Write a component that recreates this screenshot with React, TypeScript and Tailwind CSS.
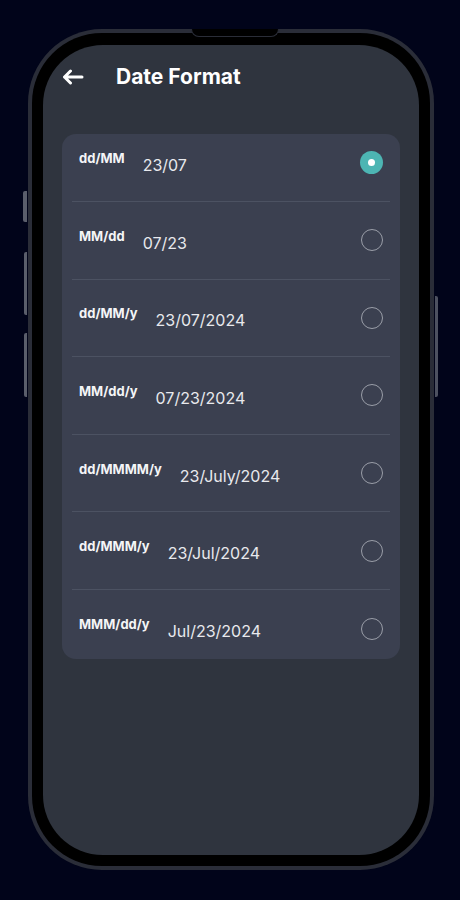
import React from "react";

const formats = [
  { label: "dd/MM", value: "23/07", selected: true },
  { label: "MM/dd", value: "07/23" },
  { label: "dd/MM/y", value: "23/07/2024" },
  { label: "MM/dd/y", value: "07/23/2024" },
  { label: "dd/MMMM/y", value: "23/July/2024" },
  { label: "dd/MMM/y", value: "23/Jul/2024" },
  { label: "MMM/dd/y", value: "Jul/23/2024" },
];

function BackArrow() {
  return (
    <svg width="22" height="16" viewBox="0 0 22 16" fill="none">
      <path
        d="M20 8H2.5M8.5 2L2.5 8L8.5 14"
        stroke="#ffffff"
        strokeWidth="3"
        strokeLinecap="round"
        strokeLinejoin="round"
      />
    </svg>
  );
}

function Radio({ checked }: { checked?: boolean }) {
  if (checked) {
    return (
      <span className="flex h-[23px] w-[23px] items-center justify-center rounded-full bg-[#4db5b3]">
        <span className="h-[7px] w-[7px] rounded-full bg-white" />
      </span>
    );
  }
  return <span className="h-[22px] w-[22px] rounded-full border-[1.5px] border-[#9a9ea8]" />;
}

function FormatRow({
  label,
  value,
  selected,
  index,
  last,
}: {
  label: string;
  value: string;
  selected?: boolean;
  index: number;
  last: boolean;
}) {
  const size = index === 0 ? "h-[68px] pb-[10px]" : last ? "h-[69px] pt-[9px]" : "h-[77.6px]";
  return (
    <div
      className={`flex items-center justify-between px-[7px] ${size} ${
        last ? "" : "border-b border-[#4c5262]"
      }`}
    >
      <div className="flex items-start gap-[18px]">
        <span className="text-[13px] font-bold leading-[16px] text-[#f4f5f7]">{label}</span>
        <span className="mt-[5px] text-[16px] leading-[20px] text-[#e8e9ed]">{value}</span>
      </div>
      <Radio checked={selected} />
    </div>
  );
}

export default function App() {
  return (
    <div
      className="min-h-[900px] w-full bg-[#01041a] pl-[28px] pt-[29px]"
      style={{ fontFamily: "Inter, 'Noto Sans', sans-serif" }}
    >
      <div className="relative w-[406px]">
        {/* side buttons */}
        <span className="absolute left-[-5px] top-[162px] h-[31px] w-[4px] rounded-l-[2px] bg-[#5a5e6b]" />
        <span className="absolute left-[-4px] top-[223px] h-[63px] w-[3px] rounded-l-[2px] bg-[#5a5e6b]" />
        <span className="absolute left-[-4px] top-[304px] h-[64px] w-[3px] rounded-l-[2px] bg-[#5a5e6b]" />
        <span className="absolute right-[-4px] top-[267px] h-[101px] w-[3px] rounded-r-[2px] bg-[#4d5160]" />

        <div className="h-[841px] rounded-[74px] bg-[#2a2d38] p-[4px]">
          <div className="relative h-full rounded-[70px] bg-black px-[11px] pb-[11px] pt-[12px]">
            <span className="absolute left-[159px] top-[-4px] h-[8px] w-[88px] rounded-b-full border border-t-0 border-[#2a2d38] bg-black" />
            <div className="h-full overflow-hidden rounded-[60px] bg-[#2f343e] px-[19px] pt-[22px]">
              <header className="flex h-[20px] items-center gap-[32px]">
                <span className="flex h-[16px] items-center">
                  <BackArrow />
                </span>
                <h1 className="text-[21px] font-bold leading-[20px] text-white">Date Format</h1>
              </header>

              <div className="mt-[47px] rounded-[14px] bg-[#3b4050] px-[10px]">
                {formats.map((f, i) => (
                  <FormatRow
                    key={f.label}
                    label={f.label}
                    value={f.value}
                    selected={f.selected}
                    index={i}
                    last={i === formats.length - 1}
                  />
                ))}
              </div>
            </div>
          </div>
        </div>
      </div>
    </div>
  );
}
